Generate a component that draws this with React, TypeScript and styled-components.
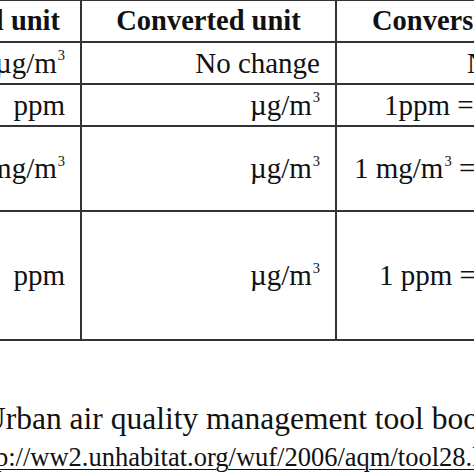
import React from 'react'
import styled, { createGlobalStyle } from 'styled-components'

const GlobalStyle = createGlobalStyle`
  html, body {
    margin: 0;
    padding: 0;
    background: #fff;
  }
  body {
    width: 474px;
    height: 474px;
    overflow: hidden;
    font-family: "Liberation Serif", "Times New Roman", serif;
    color: #111;
  }
`

const Page = styled.div`
  width: 474px;
  height: 474px;
  overflow: hidden;
  position: relative;
`

const Table = styled.table`
  border-collapse: collapse;
  table-layout: fixed;
  margin: -1px 0 0 -150px;
  width: 870px;
`

const Row = styled.tr<{ $h: number }>`
  height: ${(p) => p.$h}px;
`

const HeadCell = styled.th<{ $align?: string; $pad?: number; $indent?: number }>`
  border: 2px solid #333;
  font-weight: bold;
  font-size: 28.5px;
  text-align: ${(p) => p.$align || 'center'};
  padding: 0 ${(p) => p.$pad ?? 0}px 0 ${(p) => p.$indent ?? 0}px;
  white-space: nowrap;
  overflow: hidden;
  vertical-align: middle;
`

const Cell = styled.td<{ $align?: string; $indent?: number }>`
  border: 2px solid #333;
  font-size: 29px;
  text-align: ${(p) => p.$align || 'right'};
  padding: 0 ${(p) => (p.$align === 'left' ? 0 : 15)}px 0 ${(p) => p.$indent ?? 0}px;
  white-space: nowrap;
  overflow: hidden;
  vertical-align: middle;
`

const Sup = styled.sup`
  font-size: 50%;
  vertical-align: 0.85em;
  line-height: 0;
  margin-left: 1px;
`

const Caption = styled.div`
  margin-top: 61px;
  display: flex;
  flex-direction: column;
  gap: 7px;
`

const Title = styled.div`
  font-size: 31.5px;
  line-height: 33px;
  margin-left: -17px;
  white-space: nowrap;
`

const Url = styled.div`
  font-size: 26.5px;
  line-height: 30px;
  margin-left: -33px;
  text-decoration: underline;
  text-decoration-thickness: 1px;
  text-underline-offset: 3px;
  white-space: nowrap;
`

const M3 = ({ prefix }: { prefix: string }) => (
  <>
    {prefix}g/m<Sup>3</Sup>
  </>
)

export default function App() {
  return (
    <Page>
      <GlobalStyle />
      <Table>
        <colgroup>
          <col style={{ width: 230 }} />
          <col style={{ width: 255 }} />
          <col style={{ width: 385 }} />
        </colgroup>
        <tbody>
          <Row $h={42}>
            <HeadCell $align="right" $pad={20}>Original unit</HeadCell>
            <HeadCell>Converted unit</HeadCell>
            <HeadCell $align="left" $indent={35}>Conversion factor</HeadCell>
          </Row>
          <Row $h={42}>
            <Cell><M3 prefix="µ" /></Cell>
            <Cell>No change</Cell>
            <Cell $align="left" $indent={130}>No change</Cell>
          </Row>
          <Row $h={42}>
            <Cell>ppm</Cell>
            <Cell><M3 prefix="µ" /></Cell>
            <Cell $align="left" $indent={47}>1ppm = 1000 × MW/24.45 µg/m<Sup>3</Sup></Cell>
          </Row>
          <Row $h={85}>
            <Cell><M3 prefix="m" /></Cell>
            <Cell><M3 prefix="µ" /></Cell>
            <Cell $align="left" $indent={17}>1 mg/m<Sup>3</Sup> = 1000 µg/m<Sup>3</Sup></Cell>
          </Row>
          <Row $h={129}>
            <Cell>ppm</Cell>
            <Cell><M3 prefix="µ" /></Cell>
            <Cell $align="left" $indent={42}>1 ppm = 1000 × MW/24.45 µg/m<Sup>3</Sup></Cell>
          </Row>
        </tbody>
      </Table>
      <Caption>
        <Title>Urban air quality management tool book</Title>
        <Url>http://ww2.unhabitat.org/wuf/2006/aqm/tool28.htm</Url>
      </Caption>
    </Page>
  )
}
